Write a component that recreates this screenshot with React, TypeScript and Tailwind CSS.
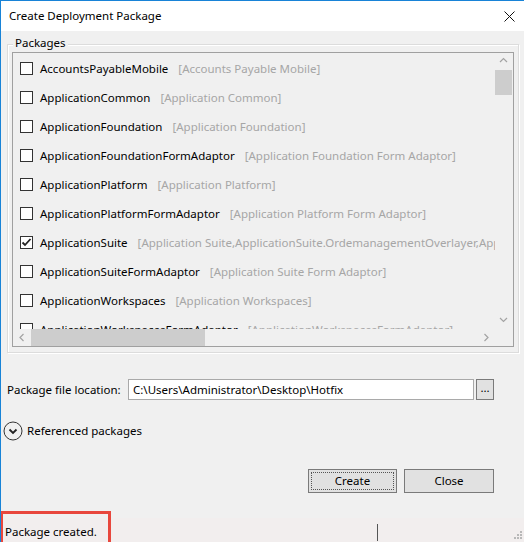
import React from "react";

const rows: { name: string; desc: string; checked?: boolean }[] = [
  { name: "AccountsPayableMobile", desc: "[Accounts Payable Mobile]" },
  { name: "ApplicationCommon", desc: "[Application Common]" },
  { name: "ApplicationFoundation", desc: "[Application Foundation]" },
  { name: "ApplicationFoundationFormAdaptor", desc: "[Application Foundation Form Adaptor]" },
  { name: "ApplicationPlatform", desc: "[Application Platform]" },
  { name: "ApplicationPlatformFormAdaptor", desc: "[Application Platform Form Adaptor]" },
  {
    name: "ApplicationSuite",
    desc: "[Application Suite,ApplicationSuite.OrdemanagementOverlayer,App",
    checked: true,
  },
  { name: "ApplicationSuiteFormAdaptor", desc: "[Application Suite Form Adaptor]" },
  { name: "ApplicationWorkspaces", desc: "[Application Workspaces]" },
  { name: "ApplicationWorkspacesFormAdaptor", desc: "[ApplicationWorkspacesFormAdaptor]" },
];

function Chevron({ dir }: { dir: "up" | "down" | "left" | "right" }) {
  const paths = {
    up: "M1 5 L4.5 1.5 L8 5",
    down: "M1 2 L4.5 5.5 L8 2",
    left: "M5.5 1 L2 4.5 L5.5 8",
    right: "M2.5 1 L6 4.5 L2.5 8",
  };
  return (
    <svg width="9" height="9" viewBox="0 0 9 9">
      <path d={paths[dir]} fill="none" stroke="#a3a3a3" strokeWidth="1.2" />
    </svg>
  );
}

function Row({ name, desc, checked }: { name: string; desc: string; checked?: boolean }) {
  return (
    <div className="flex h-[29px] shrink-0 items-center pl-[7px] whitespace-nowrap">
      <div className="flex h-[13px] w-[13px] shrink-0 items-center justify-center border border-[#333333] bg-white">
        {checked && (
          <svg width="11" height="11" viewBox="0 0 11 11">
            <path d="M1.5 5.5 L4 8 L9.5 2" fill="none" stroke="#222" strokeWidth="1.8" />
          </svg>
        )}
      </div>
      <span className="ml-[7px] text-black">{name}</span>
      <span className="ml-[10px] text-[#a6a6a6]">{desc}</span>
    </div>
  );
}

export default function App() {
  return (
    <div
      className="relative flex h-[542px] w-[524px] flex-col overflow-hidden border-l border-t border-[#1883d7] bg-[#f0f0f0] text-[11.5px] leading-none text-black"
      style={{ fontFamily: '"Noto Sans", "Open Sans", sans-serif' }}
    >
      {/* Title bar */}
      <div className="flex h-[30px] shrink-0 items-center justify-between bg-white pl-[8px] pr-[9px]">
        <span>Create Deployment Package</span>
        <svg width="11" height="11" viewBox="0 0 11 11">
          <path d="M0.5 0.5 L10.5 10.5 M10.5 0.5 L0.5 10.5" stroke="#111" strokeWidth="1" />
        </svg>
      </div>

      {/* Packages group */}
      <div className="relative ml-[6px] mt-[13px] h-[309px] w-[512px] shrink-0 border border-[#dcdcdc] shadow-[inset_1px_1px_0_#ffffff,1px_1px_0_#ffffff]">
        <span className="absolute -top-[8px] left-[5px] bg-[#f0f0f0] px-[2px]">Packages</span>
        <div className="ml-[4px] mt-[7px] flex h-[295px] w-[502px] border border-[#a0a0a0]">
          <div className="flex w-[482px] flex-col overflow-hidden">
            <div className="flex h-[276px] flex-col overflow-hidden pt-[1px]">
              {rows.map((r) => (
                <Row key={r.name} {...r} />
              ))}
            </div>
            {/* horizontal scrollbar */}
            <div className="flex h-[17px] items-center">
              <div className="flex w-[18px] justify-center">
                <Chevron dir="left" />
              </div>
              <div className="h-[17px] w-[174px] bg-[#cdcdcd]" />
              <div className="flex-1" />
              <div className="flex w-[18px] justify-center">
                <Chevron dir="right" />
              </div>
            </div>
          </div>
          {/* vertical scrollbar */}
          <div className="flex w-[17px] flex-col">
            <div className="flex h-[17px] items-center justify-center">
              <Chevron dir="up" />
            </div>
            <div className="h-[25px] bg-[#cdcdcd]" />
            <div className="flex-1" />
            <div className="flex h-[17px] items-center justify-center">
              <Chevron dir="down" />
            </div>
            <div className="h-[17px]" />
          </div>
        </div>
      </div>

      {/* Package file location */}
      <div className="mt-[26px] flex h-[21px] shrink-0 items-center pl-[6px]">
        <span className="w-[121px]">Package file location:</span>
        <div className="flex h-[21px] w-[346px] items-center border border-[#a9a9a9] bg-white pl-[4px]">
          C:\Users\Administrator\Desktop\Hotfix
        </div>
        <div className="ml-[2px] flex h-[21px] w-[18px] items-center justify-center border border-[#7a7a7a] bg-[#e1e1e1] pb-[3px]">
          ...
        </div>
      </div>

      {/* Referenced packages */}
      <div className="mt-[21px] flex h-[20px] shrink-0 items-center pl-[2px]">
        <svg width="20" height="20" viewBox="0 0 20 20">
          <circle cx="10" cy="10" r="9" fill="none" stroke="#333" strokeWidth="1" />
          <path d="M6.5 8.5 L10 12 L13.5 8.5" fill="none" stroke="#222" strokeWidth="1.8" />
        </svg>
        <span className="ml-[4px]">Referenced packages</span>
      </div>

      {/* Buttons */}
      <div className="mt-[28px] flex h-[24px] shrink-0 justify-end gap-[7px] pr-[30px]">
        <div className="flex w-[89px] items-center justify-center border border-[#7a7a7a] bg-[#e1e1e1] p-[2px]">
          <div className="flex h-full w-full items-center justify-center border border-dotted border-[#555]">
            Create
          </div>
        </div>
        <div className="flex w-[90px] items-center justify-center border border-[#7a7a7a] bg-[#e1e1e1]">
          Close
        </div>
      </div>

      {/* Status bar */}
      <div className="mt-[25px] flex h-[24px] shrink-0 items-center bg-[#f2eeee] pl-[4px] pt-[4px]">
        <span className="w-[372px]">Package created.</span>
        <div className="h-[17px] w-px bg-[#555]" />
        <div className="flex-1" />
        <svg width="11" height="11" viewBox="0 0 11 11" className="mr-[2px] mt-[6px]">
          {[
            [9, 1],
            [9, 4],
            [6, 4],
            [9, 7],
            [6, 7],
            [3, 7],
          ].map(([x, y]) => (
            <rect key={`${x}-${y}`} x={x} y={y} width="2" height="2" fill="#b8b8b8" />
          ))}
        </svg>
      </div>

      {/* highlight annotation */}
      <div className="absolute left-[-1px] top-[510px] h-[34px] w-[111px] border-[3px] border-[#e8473d]" />
    </div>
  );
}
